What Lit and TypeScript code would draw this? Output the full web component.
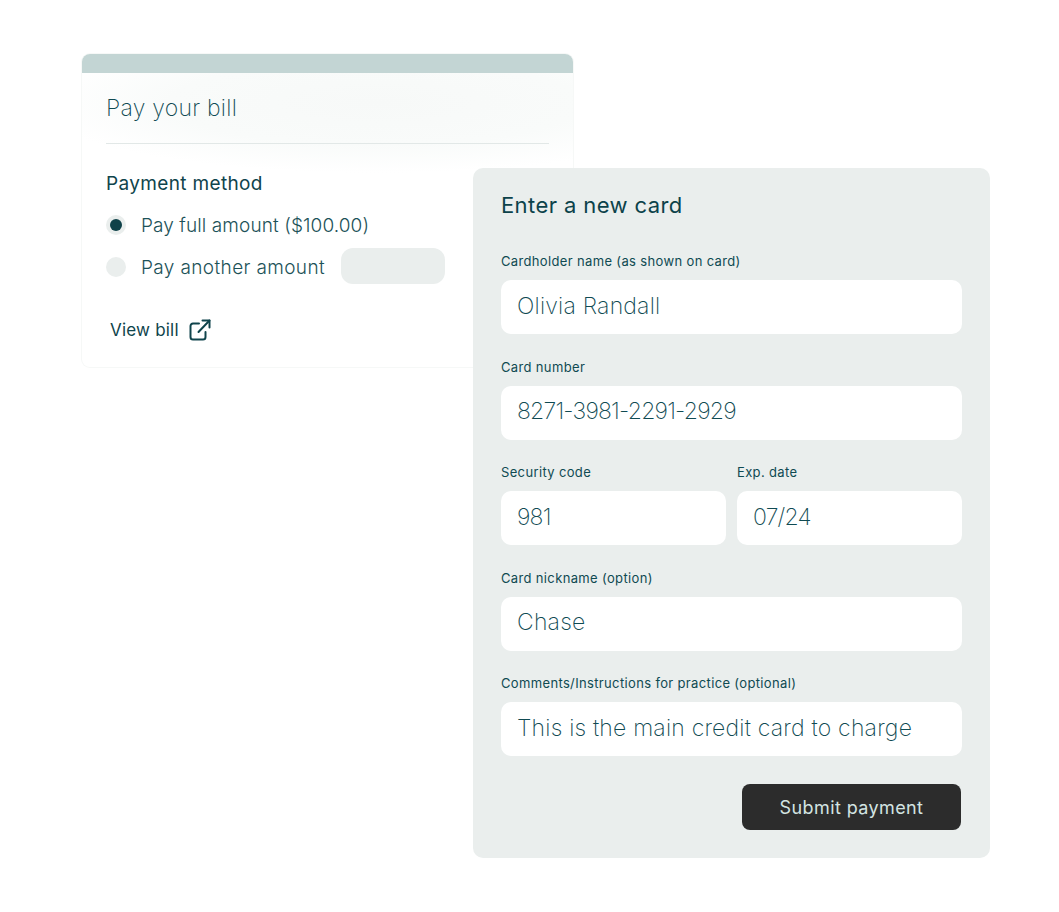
import { LitElement, html, css } from "lit";
import { customElement } from "lit/decorators.js";

@customElement("app-root")
export class AppRoot extends LitElement {
  static styles = css`
    :host { display: block; width: 1059px; height: 912px; background: #fff; font-family: "Inter", "Liberation Sans", sans-serif; color: #0f4a52; }
    .stage { position: relative; width: 1059px; height: 912px; padding: 54px 0 0 82px; box-sizing: border-box; }
    .bill { width: 491px; height: 313px; box-sizing: border-box; border-radius: 8px; background: #fff; box-shadow: 0 0 0 1px #f6f8f7; overflow: hidden; }
    .bar { height: 19px; background: #c3d5d4; }
    .bill-body { padding: 0 24px; background: radial-gradient(ellipse 70% 70px at 60% 30px, #f7f9f8 0, #f9fbfa 60%, #fff 100%); }
    .bill-title { height: 70px; border-bottom: 1px solid #e2e8e7; display: flex; align-items: center; font-size: 23px; font-weight: 200; color: #0f4a52; letter-spacing: 0.25px; }
    .method { margin-top: 28.5px; font-size: 19px; font-weight: 400; letter-spacing: 0.35px; line-height: 22px; color: #0f444c; }
    .options { margin-top: 12.5px; display: flex; flex-direction: column; gap: 6px; }
    .opt { display: flex; align-items: center; height: 36px; font-size: 19px; font-weight: 300; color: #1c5258; letter-spacing: 0.1px; }
    .opt.wide { letter-spacing: 0.38px; }
    .radio { width: 20px; height: 20px; border-radius: 50%; background: #eaeeed; display: flex; align-items: center; justify-content: center; margin-right: 15px; flex: none; }
    .radio i { width: 12px; height: 12px; border-radius: 50%; background: #0f4149; display: block; }
    .amount { width: 104px; height: 36px; border-radius: 12px; background: #eaeeed; margin: 0 0 2px 16px; }
    .view { margin: 32px 0 0 4px; display: flex; align-items: center; gap: 10px; font-size: 17px; font-weight: 400; height: 26px; letter-spacing: 0.2px; color: #0f444c; }
    .view svg { display: block; }
    .card { position: absolute; left: 473px; top: 168px; width: 517px; height: 690px; box-sizing: border-box; padding: 23px 28px 0; border-radius: 10px; background: #eaeeed; }
    .card h2 { margin: 0; font-size: 22px; line-height: 28px; font-weight: 400; color: #0c424a; letter-spacing: 0.4px; }
    .form { margin-top: 34px; display: flex; flex-direction: column; gap: 24.5px; }
    .row { display: grid; grid-template-columns: 225px 225px; gap: 11px; }
    .lab { font-size: 13px; line-height: 16px; height: 16px; margin-bottom: 11px; color: #0f4a52; font-weight: 400; letter-spacing: 0.35px; white-space: nowrap; }
    .inp { height: 54px; box-sizing: border-box; padding: 0 0 3px 16px; border-radius: 10px; background: #fff; display: flex; align-items: center; font-size: 23px; font-weight: 200; color: #0f4a52; letter-spacing: 0.2px; white-space: nowrap; }
    .inp.num { letter-spacing: -0.8px; }
    .foot { margin-top: 28px; display: flex; justify-content: flex-end; padding-right: 1px; }
    .btn { width: 219px; height: 46px; border-radius: 8px; background: #2c2c2c; color: #d3e4e2; display: flex; align-items: center; justify-content: center; font-size: 18px; font-weight: 400; letter-spacing: 0.4px; }
  `;

  private field(label: string, value: string, num = false) {
    return html`<div><div class="lab">${label}</div><div class="inp ${num ? "num" : ""}">${value}</div></div>`;
  }

  render() {
    return html`<div class="stage">
      <section class="bill">
        <div class="bar"></div>
        <div class="bill-body">
          <div class="bill-title">Pay your bill</div>
          <div class="method">Payment method</div>
          <div class="options">
            <div class="opt"><span class="radio"><i></i></span>Pay full amount ($100.00)</div>
            <div class="opt wide"><span class="radio"></span>Pay another amount<span class="amount"></span></div>
          </div>
          <div class="view">View bill
            <svg width="22" height="22" viewBox="0 0 22 22" fill="none" stroke="#10444c" stroke-width="2" stroke-linecap="round" stroke-linejoin="round">
              <path d="M10 4.5H4a2.5 2.5 0 0 0-2.5 2.5v11A2.5 2.5 0 0 0 4 20.5h10a2.5 2.5 0 0 0 2.5-2.5v-5"/>
              <path d="M13.5 1.5h7v7"/><path d="M20.5 1.5 9.5 13"/>
            </svg>
          </div>
        </div>
      </section>
      <section class="card">
        <h2>Enter a new card</h2>
        <div class="form">
          ${this.field("Cardholder name (as shown on card)", "Olivia Randall")}
          ${this.field("Card number", "8271-3981-2291-2929", true)}
          <div class="row">
            ${this.field("Security code", "981", true)}
            ${this.field("Exp. date", "07/24", true)}
          </div>
          ${this.field("Card nickname (option)", "Chase")}
          ${this.field("Comments/Instructions for practice (optional)", "This is the main credit card to charge")}
        </div>
        <div class="foot"><div class="btn">Submit payment</div></div>
      </section>
    </div>`;
  }
}
